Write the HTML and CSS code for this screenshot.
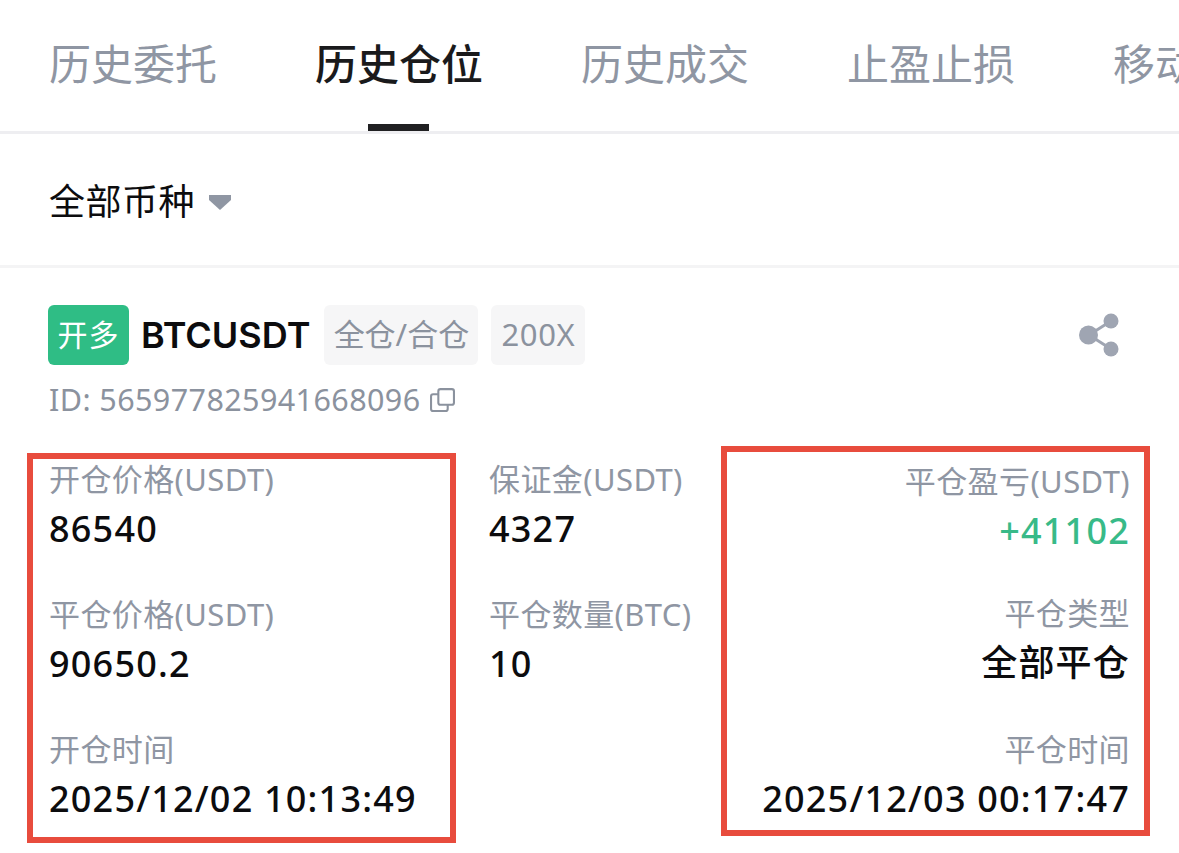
FILE: index.html
```html
<!DOCTYPE html>
<html lang="zh">
<head>
<meta charset="utf-8">
<title>历史仓位</title>
<link rel="stylesheet" href="styles.css">
</head>
<body>
<div class="page">
  <nav class="tabs">
    <span class="tab">历史委托</span>
    <span class="tab active">历史仓位</span>
    <span class="tab">历史成交</span>
    <span class="tab">止盈止损</span>
    <span class="tab">移动止盈止损</span>
  </nav>
  <div class="filter">
    <span>全部币种</span>
    <svg class="caret" width="24" height="16" viewBox="0 0 24 16"><path d="M1 1h22v5l-11 10L1 6z" fill="#8f96a3"/></svg>
  </div>
  <section class="card">
    <div class="head">
      <span class="side">开多</span>
      <span class="symbol">BTCUSDT</span>
      <span class="tag tag-mode">全仓/合仓</span>
      <span class="tag tag-lev">200X</span>
      <svg class="share" width="42" height="44" viewBox="0 0 42 44"><path d="M10 22L32 8M10 22l22 14" stroke="#9fa5b2" stroke-width="3" fill="none"/><circle cx="9.500" cy="22" r="9.500" fill="#9fa5b2"/><circle cx="32" cy="8" r="7.500" fill="#9fa5b2"/><circle cx="32" cy="36" r="7.500" fill="#9fa5b2"/></svg>
    </div>
    <div class="id"><span>ID: 565977825941668096</span>
      <svg class="copy" width="25" height="25" viewBox="0 0 24 24" fill="none" stroke="#8b929e" stroke-width="2"><rect x="8" y="2" width="15" height="15" rx="2"/><path d="M8 7H3a2 2 0 0 0-2 2v12a2 2 0 0 0 2 2h12a2 2 0 0 0 2-2v-4"/></svg>
    </div>
    <div class="grid">
      <div class="col col-left">
        <div class="cell"><div class="label">开仓价格(USDT)</div><div class="value">86540</div></div>
        <div class="cell"><div class="label">平仓价格(USDT)</div><div class="value">90650.2</div></div>
        <div class="cell"><div class="label">开仓时间</div><div class="value">2025/12/02 10:13:49</div></div>
      </div>
      <div class="col col-mid">
        <div class="cell"><div class="label">保证金(USDT)</div><div class="value">4327</div></div>
        <div class="cell"><div class="label">平仓数量(BTC)</div><div class="value">10</div></div>
      </div>
      <div class="col col-right">
        <div class="cell"><div class="label">平仓盈亏(USDT)</div><div class="value profit">+41102</div></div>
        <div class="cell"><div class="label">平仓类型</div><div class="value">全部平仓</div></div>
        <div class="cell"><div class="label">平仓时间</div><div class="value">2025/12/03 00:17:47</div></div>
      </div>
    </div>
  </section>
  <div class="mark mark-left"></div>
  <div class="mark mark-right"></div>
</div>
</body>
</html>
```
FILE: styles.css
```css
* { box-sizing: border-box; }
html, body { margin: 0; padding: 0; }
body { background: #fff; font-family: "Noto Sans", "Noto Sans CJK SC", sans-serif; color: #0c0c0e; }
.page { position: relative; width: 1179px; height: 853px; overflow: hidden; }
.tabs { display: flex; gap: 98px; height: 134px; padding: 36px 0 0 49px; border-bottom: 3px solid #eeeef1; white-space: nowrap; font-size: 42px; line-height: 56px; color: #8f96a3; }
.tab { position: relative; flex: none; }
.tab.active { color: #1a1a1c; font-weight: 500; }
.tab.active::after { content: ""; position: absolute; left: 53px; bottom: 0; width: 61px; height: 7px; background: #202022; }
.filter { display: flex; align-items: center; gap: 13px; height: 134px; padding-left: 49px; border-bottom: 3px solid #f4f4f5; font-size: 36px; letter-spacing: 0.5px; }
.caret { flex: none; margin-top: 4px; }
.card { padding: 37px 49px 0 48px; }
.head { display: flex; align-items: center; height: 60px; }
.side { width: 81px; height: 60px; background: #2fbd85; color: #fff; border-radius: 6px; font-size: 30px; letter-spacing: 1px; line-height: 60px; text-align: center; }
.symbol { margin-left: 12px; font-family: "Inter", "Noto Sans", sans-serif; font-size: 36px; font-weight: 600; line-height: 60px; }
.tag { height: 60px; margin-left: 13px; background: #f6f6f7; border-radius: 6px; color: #8b929e; font-size: 31px; line-height: 58px; text-align: center; }
.tag-mode { width: 154px; margin-left: 14px; }
.tag-lev { width: 94px; letter-spacing: 0.6px; }
.share { margin-left: auto; margin-right: 9px; }
.id { display: flex; align-items: center; gap: 9px; height: 44px; margin-top: 12px; padding-left: 1px; color: #8b929e; font-size: 30.5px; letter-spacing: 0.4px; }
.grid { display: flex; margin-top: 38px; }
.col { display: flex; flex-direction: column; gap: 29px; }
.col-left { width: 441px; padding-left: 1px; }
.col-mid { width: 230px; }
.col-right { flex: 1; padding-top: 2px; text-align: right; }
.col-right .cell:nth-child(2) { margin-top: -3px; }
.col-right .cell:nth-child(3) { margin-top: 1px; }
.cell { height: 106px; white-space: nowrap; }
.label { height: 44px; color: #8f96a3; font-size: 31px; letter-spacing: 0.4px; line-height: 40px; }
.value { height: 62px; font-size: 36px; font-weight: 500; letter-spacing: 1.2px; line-height: 52px; }
.profit { color: #38ba88; }
.mark { position: absolute; border: 6px solid #e84c3d; }
.mark-left { left: 27px; top: 453px; width: 429px; height: 390px; }
.mark-right { left: 721px; top: 446px; width: 429px; height: 390px; }
```
